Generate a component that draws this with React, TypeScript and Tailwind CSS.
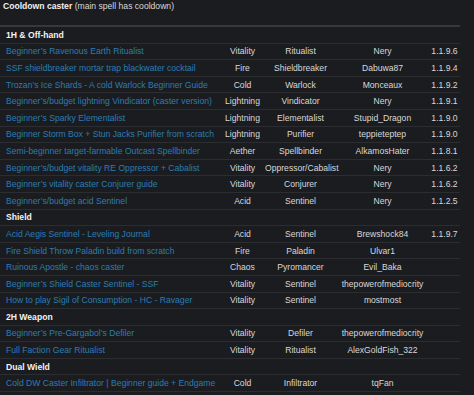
import React from 'react';

type Guide = {
  title: string;
  damage: string;
  cls: string;
  author: string;
  version?: string;
};

type Section = {
  name: string;
  guides: Guide[];
};

const sections: Section[] = [
  {
    name: '1H & Off-hand',
    guides: [
      { title: 'Beginner\u2019s Ravenous Earth Ritualist', damage: 'Vitality', cls: 'Ritualist', author: 'Nery', version: '1.1.9.6' },
      { title: 'SSF shieldbreaker mortar trap blackwater cocktail', damage: 'Fire', cls: 'Shieldbreaker', author: 'Dabuwa87', version: '1.1.9.4' },
      { title: 'Trozan\u2019s Ice Shards - A cold Warlock Beginner Guide', damage: 'Cold', cls: 'Warlock', author: 'Monceaux', version: '1.1.9.2' },
      { title: 'Beginner\u2019s/budget lightning Vindicator (caster version)', damage: 'Lightning', cls: 'Vindicator', author: 'Nery', version: '1.1.9.1' },
      { title: 'Beginner\u2019s Sparky Elementalist', damage: 'Lightning', cls: 'Elementalist', author: 'Stupid_Dragon', version: '1.1.9.0' },
      { title: 'Beginner Storm Box + Stun Jacks Purifier from scratch', damage: 'Lightning', cls: 'Purifier', author: 'teppieteptep', version: '1.1.9.0' },
      { title: 'Semi-beginner target-farmable Outcast Spellbinder', damage: 'Aether', cls: 'Spellbinder', author: 'AlkamosHater', version: '1.1.8.1' },
      { title: 'Beginner\u2019s/budget vitality RE Oppressor + Cabalist', damage: 'Vitality', cls: 'Oppressor/Cabalist', author: 'Nery', version: '1.1.6.2' },
      { title: 'Beginner\u2019s vitality caster Conjurer guide', damage: 'Vitality', cls: 'Conjurer', author: 'Nery', version: '1.1.6.2' },
      { title: 'Beginner\u2019s/budget acid Sentinel', damage: 'Acid', cls: 'Sentinel', author: 'Nery', version: '1.1.2.5' },
    ],
  },
  {
    name: 'Shield',
    guides: [
      { title: 'Acid Aegis Sentinel - Leveling Journal', damage: 'Acid', cls: 'Sentinel', author: 'Brewshock84', version: '1.1.9.7' },
      { title: 'Fire Shield Throw Paladin build from scratch', damage: 'Fire', cls: 'Paladin', author: 'Ulvar1' },
      { title: 'Ruinous Apostle - chaos caster', damage: 'Chaos', cls: 'Pyromancer', author: 'Evil_Baka' },
      { title: 'Beginner\u2019s Shield Caster Sentinel - SSF', damage: 'Vitality', cls: 'Sentinel', author: 'thepowerofmediocrity' },
      { title: 'How to play Sigil of Consumption - HC - Ravager', damage: 'Vitality', cls: 'Sentinel', author: 'mostmost' },
    ],
  },
  {
    name: '2H Weapon',
    guides: [
      { title: 'Beginner\u2019s Pre-Gargabol\u2019s Defiler', damage: 'Vitality', cls: 'Defiler', author: 'thepowerofmediocrity' },
      { title: 'Full Faction Gear Ritualist', damage: 'Vitality', cls: 'Ritualist', author: 'AlexGoldFish_322' },
    ],
  },
  {
    name: 'Dual Wield',
    guides: [
      { title: 'Cold DW Caster Infiltrator | Beginner guide + Endgame', damage: 'Cold', cls: 'Infiltrator', author: 'tqFan' },
    ],
  },
];

const rowCls =
  'grid grid-cols-[220px_45px_71px_93px_31px] h-[16.6px] items-center border-b border-[#2c2d31] whitespace-nowrap';

export default function App() {
  return (
    <div
      className="w-[474px] h-[395px] overflow-hidden bg-[#1b1c20] text-[#d8d8d8] text-[8.6px] leading-[12px]"
      style={{ fontFamily: '"Liberation Sans", Arial, sans-serif' }}
    >
      <div className="w-[460px]">
        <div className="h-[27px] pl-[3px] border-b-2 border-[#37383c]">
          <span className="font-bold text-[#f0f0f0]">Cooldown caster</span>{' '}
          <span>(main spell has cooldown)</span>
        </div>

        {sections.map((section) => (
          <React.Fragment key={section.name}>
            <div className={rowCls}>
              <span className="pl-[6px] font-bold text-[#f2f2f2]">{section.name}</span>
            </div>
            {section.guides.map((g) => (
              <div key={g.title} className={rowCls}>
                <a href="#" className="pl-[6px] text-[#2b7cb2]">
                  {g.title}
                </a>
                <span className="text-center">{g.damage}</span>
                <span className="text-center">{g.cls}</span>
                <span className="text-center">{g.author}</span>
                <span className="text-center">{g.version ?? ''}</span>
              </div>
            ))}
          </React.Fragment>
        ))}
      </div>
    </div>
  );
}
